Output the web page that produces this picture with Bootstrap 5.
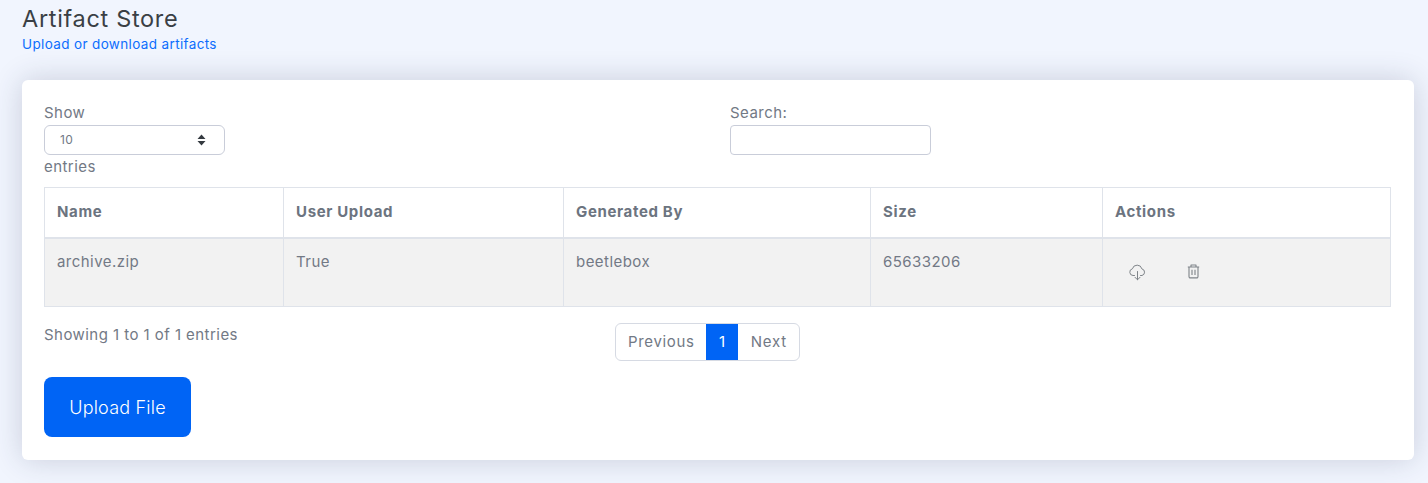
<!DOCTYPE html>
<html lang="en">
<head>
<meta charset="utf-8">
<title>Artifact Store</title>
<link href="https://cdn.jsdelivr.net/npm/bootstrap@5.3.0/dist/css/bootstrap.min.css" rel="stylesheet">
<style>
html,body{height:483px;overflow:hidden}
body{background:#f1f5fe;font-family:Inter,"Liberation Sans",sans-serif;font-size:15px;color:#727985;line-height:22px;letter-spacing:.45px}
.page-wrap{padding:5px 14px 0 22px}
.page-title{font-size:23.5px;line-height:28px;font-weight:400;color:#3a3f45;margin:0;letter-spacing:.68px}
.page-sub{font-size:13.5px;line-height:20px;color:#0d6efd;margin:1px 0 0;letter-spacing:.36px}
.store-card{margin-top:26px;height:380px;padding:22px;border:0;border-radius:6px;box-shadow:0 0 30px rgba(40,50,80,.2)}
.top-row{height:85px;width:100%;flex:none}
.len-col{width:686px}
.show-lbl{height:23px}
.sel-box{width:181px;height:30px;border:1px solid #c9cdd9;border-radius:6px;font-size:12px;padding:0 18px 0 15px;color:#727985;margin-bottom:1px}
.search-box{width:201px;height:30px;border:1px solid #c9cdd9;border-radius:4px;display:block}
.arrows{width:9px;height:12px}
.data-table{margin:0;border-color:#dfe3ea;table-layout:fixed;width:1347px;font-size:15px;flex:none}
.data-table th{height:50px;padding:0 12px;vertical-align:middle;font-weight:700;color:#6c7480;border-bottom:2px solid #dfe3ea;letter-spacing:.65px}
.data-table td{height:69px;padding:12px;vertical-align:top;background:#f2f2f2;color:#727985}
.act-row{padding:13px 0 0 14px;gap:41px}
.icon-act{color:#7f8489;display:block}
.pager-row{height:70px;padding-top:16px;flex:none}
.info-col{width:571px;padding-top:1px}
.pager{border:1px solid #d6dae3;border-radius:6px;height:38px;overflow:hidden}
.pager a{padding:0 12px;line-height:36px;color:#727985;text-decoration:none;display:block;letter-spacing:.65px}
.pager a.on{background:#0064f5;color:#fff;padding:0 12.5px;margin:-1px 0;line-height:38px}
.pager a.nx{padding-left:12.5px;letter-spacing:.75px}
.upload-btn{width:147px;height:60px;background:#0064f5;border:0;border-radius:8px;font-size:18px;color:#fff;padding:0;letter-spacing:.2px;font-weight:300}
</style>
</head>
<body>
<div class="page-wrap">
  <h1 class="page-title">Artifact Store</h1>
  <p class="page-sub">Upload or download artifacts</p>
  <div class="card store-card">
    <div class="d-flex top-row">
      <div class="len-col">
        <div class="show-lbl">Show</div>
        <div class="sel-box d-flex align-items-center justify-content-between">
          <span>10</span>
          <svg class="arrows" viewBox="0 0 9 12"><path d="M4.5 0.5 8.5 5H.5zM4.5 11.5 .5 7h8z" fill="#343a40"/></svg>
        </div>
        <div>entries</div>
      </div>
      <div>
        <div class="show-lbl">Search:</div>
        <input class="search-box" type="text" aria-label="Search">
      </div>
    </div>
    <table class="table table-bordered data-table">
      <colgroup><col style="width:239px"><col style="width:280px"><col style="width:307px"><col style="width:232px"><col style="width:288px"></colgroup>
      <thead><tr><th>Name</th><th>User Upload</th><th>Generated By</th><th>Size</th><th>Actions</th></tr></thead>
      <tbody><tr>
        <td>archive.zip</td><td>True</td><td>beetlebox</td><td>65633206</td>
        <td>
          <div class="d-flex act-row">
            <svg class="icon-act" width="17" height="17" viewBox="0 0 17 17" fill="none" stroke="currentColor" stroke-width="1" stroke-linecap="round" stroke-linejoin="round"><path d="M5.5 11.5H4A3.4 3.4 0 0 1 3.4 4.8 4.9 4.9 0 0 1 12.9 4.9 3.4 3.4 0 0 1 13 11.5H11.5"/><path d="M8.5 7.5V15.8M6 13.3 8.5 15.8 11 13.3"/></svg>
            <svg class="icon-act" width="13" height="15" viewBox="0 0 13 15" fill="none" stroke="currentColor" stroke-width="1.1" stroke-linejoin="round"><path d="M.8 3H12.2M4 2.8V1H9V2.8M2 3V12.6A1.3 1.3 0 0 0 3.3 13.9H9.7A1.3 1.3 0 0 0 11 12.6V3"/><path d="M5 5.8V11M8 5.8V11"/></svg>
          </div>
        </td>
      </tr></tbody>
    </table>
    <div class="d-flex pager-row">
      <div class="info-col">Showing 1 to 1 of 1 entries</div>
      <div class="d-flex pager">
        <a href="#">Previous</a><a href="#" class="on">1</a><a href="#" class="nx">Next</a>
      </div>
    </div>
    <div><button class="btn upload-btn" type="button">Upload File</button></div>
  </div>
</div>
</body>
</html>
